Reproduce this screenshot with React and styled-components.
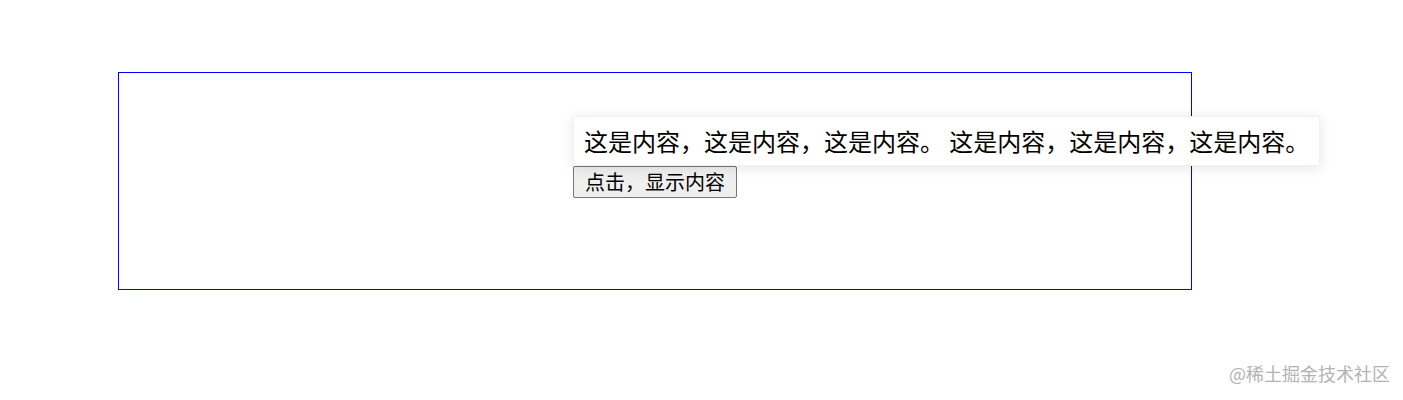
import React from 'react';
import styled, { createGlobalStyle } from 'styled-components';

const GlobalStyle = createGlobalStyle`
    body {
        margin: 0;
        background: #fff;
        font-family: 'Liberation Sans', 'Noto Sans CJK SC', sans-serif;
    }
`;

const Page = styled.div`
    position: relative;
    width: 1403px;
    height: 400px;
    padding: 72px 0 0 118px;
    box-sizing: border-box;
`;

const Frame = styled.div`
    width: 1074px;
    height: 218px;
    box-sizing: border-box;
    border: 1px solid blue;
    display: flex;
    justify-content: center;
    align-items: center;
    padding-top: 1px;
`;

const Anchor = styled.div`
    position: relative;
    display: inline-block;
`;

const Tip = styled.div`
    position: absolute;
    left: 0;
    bottom: 100%;
    padding: 7px 10px;
    background: #fff;
    border: 1px solid #f0f0f5;
    white-space: nowrap;
    font-size: 24px;
    line-height: 34px;
    color: #000;
    font-family: 'Noto Sans CJK SC', sans-serif;
    box-shadow: 0 2px 12px rgba(0, 0, 0, 0.1);
`;

const Trigger = styled.button`
    font-family: 'Noto Sans CJK SC', sans-serif;
    font-size: 20px;
    line-height: 26px;
    height: 32px;
    padding: 0 11px;
    display: block;
    color: #000;
    background: #efefef;
    border: 1px solid #767676;
    border-radius: 2px;
`;

const Watermark = styled.span`
    position: absolute;
    right: 13px;
    bottom: 14px;
    font-family: 'Noto Sans CJK SC', sans-serif;
    font-size: 18px;
    color: #b3b3b3;
`;

export default () => (
    <Page>
        <GlobalStyle />
        <Frame>
            <Anchor>
                <Tip>这是内容，这是内容，这是内容。 这是内容，这是内容，这是内容。</Tip>
                <Trigger>点击，显示内容</Trigger>
            </Anchor>
        </Frame>
        <Watermark>@稀土掘金技术社区</Watermark>
    </Page>
);
